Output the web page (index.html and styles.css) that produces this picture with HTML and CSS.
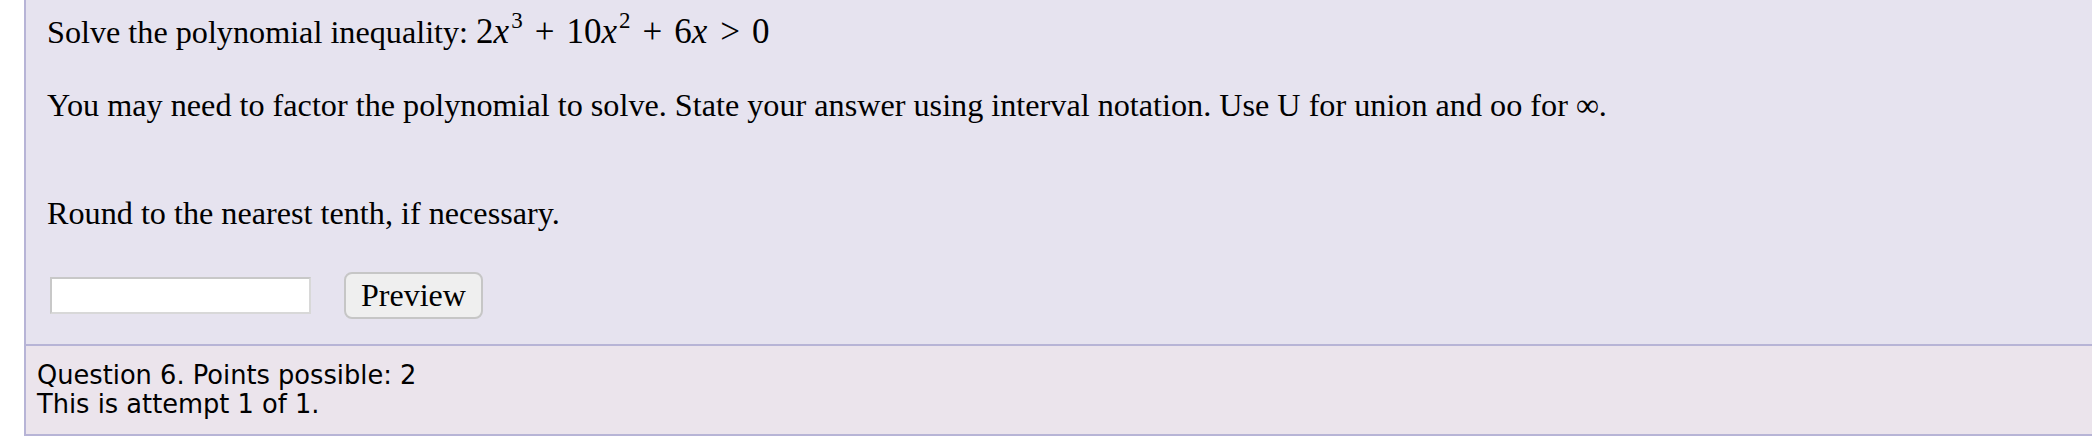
FILE: index.html
```html
<!DOCTYPE html>
<html>
<head>
<meta charset="utf-8">
<link rel="stylesheet" href="styles.css">
</head>
<body>
<div class="question">
  <div class="qbody">
    <p class="line first">Solve the polynomial inequality: <span class="math"><span class="mn">2</span><span class="mi">x</span><sup class="sup">3</sup><span class="mo">+</span><span class="mn">10</span><span class="mi">x</span><sup class="sup">2</sup><span class="mo">+</span><span class="mn">6</span><span class="mi">x</span><span class="mo">&gt;</span><span class="mn">0</span></span></p>
    <p class="line second">You may need to factor the polynomial to solve. State your answer using interval notation. Use U for union and oo for ∞.</p>
    <p class="line third">Round to the nearest tenth, if necessary.</p>
    <div class="answer">
      <input class="ansbox" type="text">
      <button class="preview" type="button">Preview</button>
    </div>
  </div>
  <div class="qfooter">
    <div>Question 6. Points possible: 2</div>
    <div>This is attempt 1 of 1.</div>
  </div>
</div>
</body>
</html>
```
FILE: styles.css
```css
html, body {
  margin: 0;
  padding: 0;
  background: #ffffff;
}
.question {
  margin-left: 24px;
  border-left: 2px solid #b7b4d6;
  border-bottom: 2px solid #b7b4d6;
}
.qbody {
  background: #e6e3ef;
  padding: 14px 0 25px 21px;
  font-family: "Liberation Serif", "Times New Roman", serif;
  font-size: 32.2px;
  color: #000;
}
.line {
  margin: 0;
  line-height: 36px;
  white-space: nowrap;
}
.second {
  margin-top: 33px;
}
.third {
  margin-top: 72px;
}
.math {
  font-family: "Liberation Serif", serif;
  font-size: 35px;
  line-height: 36px;
}
.mi {
  font-style: italic;
  margin-right: 1px;
}
.sup {
  font-size: 23px;
  vertical-align: 0;
  position: relative;
  top: -15px;
  margin-left: 1px;
}
.mo {
  margin: 0 12px;
}
.answer {
  margin-top: 41px;
  display: flex;
  align-items: center;
  gap: 33px;
}
.ansbox {
  margin: 0 0 0 3px;
  width: 261px;
  height: 37px;
  box-sizing: border-box;
  border: 2px solid #c8c8c8;
  border-right-color: #d8d8d8;
  border-bottom-color: #d8d8d8;
  background: #fff;
  padding: 0;
}
.preview {
  margin: 0;
  width: 139px;
  height: 47px;
  box-sizing: border-box;
  border: 2px solid #c6c6c6;
  border-radius: 8px;
  background: #efefef;
  font-family: "Liberation Serif", "Times New Roman", serif;
  font-size: 32px;
  color: #000;
  padding: 0;
}
.qfooter {
  background: #ebe4ec;
  border-top: 2px solid #b7b4d6;
  padding: 15px 0 15px 11px;
  font-family: "DejaVu Sans", sans-serif;
  font-size: 25.7px;
  line-height: 29px;
  color: #000;
}
```
